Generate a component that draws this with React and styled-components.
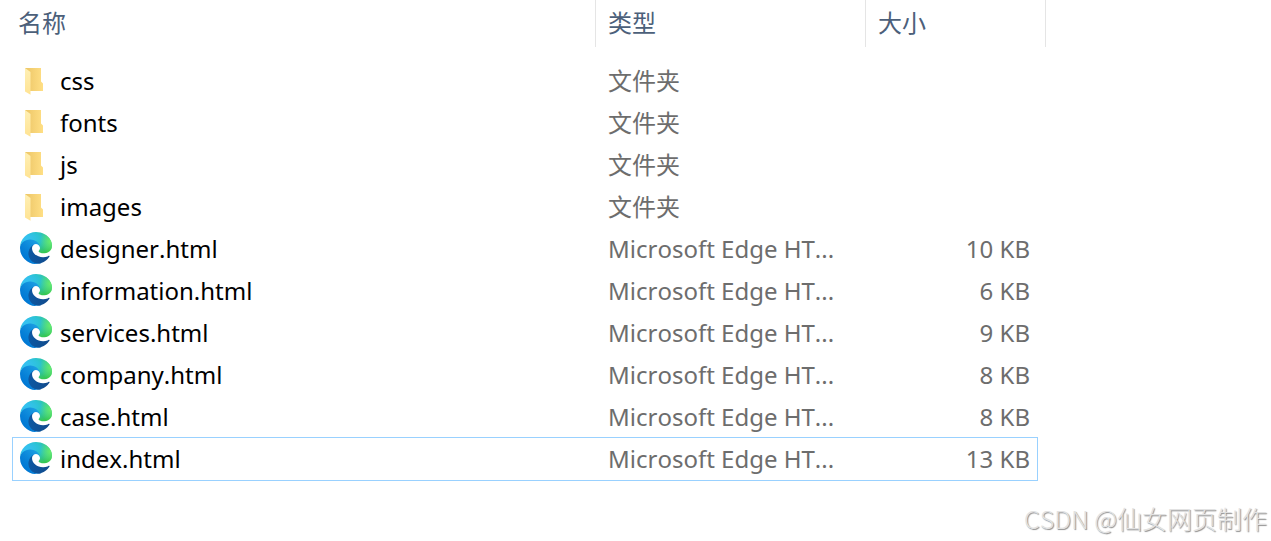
import React from 'react';
import styled, { createGlobalStyle } from 'styled-components';

const GlobalStyle = createGlobalStyle`
  * {
    box-sizing: border-box;
  }
  body {
    margin: 0;
    background-color: #ffffff;
    font-family: "Noto Sans", "Noto Sans CJK SC", sans-serif;
    font-size: 24px;
    font-kerning: none;
    line-height: 32px;
  }
`;

const Page = styled.main`
  min-height: 100vh;
  display: flex;
  flex-direction: column;
`;

const FileTable = styled.table`
  display: block;
  margin: 0 225px 0 13px;
`;

const Head = styled.thead`
  display: block;
  padding-bottom: 13px;
`;

const HeadRow = styled.tr`
  display: grid;
  grid-template-columns: minmax(0, 1fr) 270px 180px;
`;

const HeadCell = styled.th`
  height: 47px;
  padding: 7px 0 0 ${props => (props.$first ? '5px' : '12px')};
  border-right: 1px solid #e5e5e5;
  color: #4c607a;
  font-weight: 400;
  text-align: left;
`;

const Body = styled.tbody`
  display: block;
  margin-right: 9px;
`;

const Row = styled.tr`
  display: grid;
  grid-template-columns: minmax(0, 1fr) 270px 171px;
  align-items: center;
  height: 42px;
  outline: ${props => (props.$selected ? '1px solid #99d1ff' : 'none')};
`;

const Cell = styled.td`
  padding: 0 7px 0 12px;
  color: #6d6d6d;
  white-space: nowrap;
  text-align: ${props => (props.$right ? 'right' : 'left')};
`;

const NameCell = styled(Cell)`
  display: flex;
  align-items: center;
  gap: 8px;
  padding: 0 7px;
  color: #000000;
`;

const Icon = styled.svg`
  width: 32px;
  height: 32px;
  flex: none;
  margin-bottom: 2px;
`;

const Watermark = styled.footer`
  margin-top: auto;
  padding: 0 4px 7px;
  color: #e2e2e2;
  font-family: "Noto Sans CJK SC", sans-serif;
  font-size: 25px;
  font-weight: 300;
  text-align: right;
  text-shadow: 1px 1px 1px #8c8c8c;
`;

const Defs = styled.svg`
  position: absolute;
  width: 0;
  height: 0;
`;

const files = [
  { name: 'css', folder: true },
  { name: 'fonts', folder: true },
  { name: 'js', folder: true },
  { name: 'images', folder: true },
  { name: 'designer.html', size: '10 KB' },
  { name: 'information.html', size: '6 KB' },
  { name: 'services.html', size: '9 KB' },
  { name: 'company.html', size: '8 KB' },
  { name: 'case.html', size: '8 KB' },
  { name: 'index.html', size: '13 KB', selected: true },
];

// gradients shared by all the row icons
const Gradients = () => (
  <Defs aria-hidden="true">
    <defs>
      <linearGradient id="folderBack" x1="0" y1="0" x2="1" y2="0">
        <stop offset="0" stopColor="#ecc566" />
        <stop offset="1" stopColor="#ffdf85" />
      </linearGradient>
      <linearGradient id="folderFlap" x1="0" y1="0" x2="0" y2="1">
        <stop offset="0" stopColor="#fff0b5" />
        <stop offset="1" stopColor="#ffe393" />
      </linearGradient>
      <linearGradient id="edgeDark" x1="63.33" y1="84.03" x2="241.67" y2="84.03" gradientTransform="matrix(1 0 0 -1 0 266)" gradientUnits="userSpaceOnUse">
        <stop offset="0" stopColor="#0c59a4" />
        <stop offset="1" stopColor="#114a8b" />
      </linearGradient>
      <linearGradient id="edgeBlue" x1="157.35" y1="161.39" x2="45.96" y2="40.06" gradientTransform="matrix(1 0 0 -1 0 266)" gradientUnits="userSpaceOnUse">
        <stop offset="0" stopColor="#1b9de2" />
        <stop offset=".16" stopColor="#1595df" />
        <stop offset=".67" stopColor="#0680d7" />
        <stop offset="1" stopColor="#0078d4" />
      </linearGradient>
      <radialGradient id="edgeTeal" cx="113.36" cy="570.21" r="202.43" gradientTransform="matrix(-.04 1 2.13 .08 -1179.54 -106.69)" gradientUnits="userSpaceOnUse">
        <stop offset="0" stopColor="#35c1f1" />
        <stop offset=".11" stopColor="#34c1ed" />
        <stop offset=".23" stopColor="#2fc2df" />
        <stop offset=".31" stopColor="#2bc3d2" />
        <stop offset=".67" stopColor="#36c752" />
      </radialGradient>
      <radialGradient id="edgeGreen" cx="376.52" cy="567.97" r="97.34" gradientTransform="matrix(.28 .96 .78 -.23 -303.76 -148.5)" gradientUnits="userSpaceOnUse">
        <stop offset="0" stopColor="#66eb6e" />
        <stop offset="1" stopColor="#66eb6e" stopOpacity="0" />
      </radialGradient>
    </defs>
  </Defs>
);

const FolderIcon = () => (
  <Icon viewBox="0 0 32 32" aria-hidden="true">
    <path fill="url(#folderBack)" d="M5 4h16v13.500l2 2V27H9z" />
    <path fill="url(#folderFlap)" d="M5 4l5.500 4v22.800L5 27.500z" />
  </Icon>
);

const crest = 'M156.940 153.780c-.81 1.050-3.300 2.500-3.300 5.660 0 2.610 1.700 5.120 4.720 7.230 14.380 10 41.490 8.680 41.560 8.680a59.560 59.560 0 0 0 30.270-8.350 61.380 61.380 0 0 0 30.430-52.880c.26-22.410-8-37.310-11.340-43.910C228.090 28.760 182.350 4.920 132.610 4.920a128 128 0 0 0-128 126.200c.48-36.540 36.800-66.050 80-66.050 3.500 0 23.460.34 42 10.070 16.340 8.580 24.900 18.940 30.850 29.210 6.180 10.670 7.280 24.150 7.280 29.520s-2.740 13.330-7.800 19.910z';

const EdgeIcon = () => (
  <Icon viewBox="4.630 4.920 256 256" aria-hidden="true">
    <path fill="url(#edgeDark)" d="M235.680 195.530a93.730 93.730 0 0 1-10.540 4.710 101.870 101.870 0 0 1-35.900 6.460c-47.320 0-88.540-32.550-88.540-74.320A31.480 31.480 0 0 1 117.130 105c-42.800 1.800-53.800 46.400-53.800 72.530 0 73.880 68.090 81.370 82.760 81.370 7.910 0 19.840-2.300 27-4.560l1.310-.44a128.340 128.340 0 0 0 66.600-52.800 4 4 0 0 0-5.320-5.570z" />
    <path fill="url(#edgeBlue)" d="M110.340 246.340A79.200 79.200 0 0 1 87.600 225a80.720 80.720 0 0 1 29.530-120c3.120-1.470 8.450-4.130 15.540-4a32.350 32.350 0 0 1 25.690 13 31.880 31.880 0 0 1 6.360 18.660c0-.21 24.460-79.600-80-79.600-43.900 0-80 41.660-80 78.210a130.150 130.150 0 0 0 12.110 56 128 128 0 0 0 156.380 67.110 75.550 75.550 0 0 1-62.780-8z" />
    <path fill="url(#edgeTeal)" d={crest} />
    <path fill="url(#edgeGreen)" d={crest} />
  </Icon>
);

const App = () => (
  <>
    <GlobalStyle />
    <Gradients />
    <Page>
      <FileTable>
        <Head>
          <HeadRow>
            <HeadCell scope="col" $first>名称</HeadCell>
            <HeadCell scope="col">类型</HeadCell>
            <HeadCell scope="col">大小</HeadCell>
          </HeadRow>
        </Head>
        <Body>
          {files.map(file => (
            <Row key={file.name} $selected={file.selected}>
              <NameCell>
                {file.folder ? <FolderIcon /> : <EdgeIcon />}
                {file.name}
              </NameCell>
              <Cell>{file.folder ? '文件夹' : 'Microsoft Edge HT...'}</Cell>
              <Cell $right>{file.size}</Cell>
            </Row>
          ))}
        </Body>
      </FileTable>
      <Watermark>CSDN @仙女网页制作</Watermark>
    </Page>
  </>
);

export default App;
